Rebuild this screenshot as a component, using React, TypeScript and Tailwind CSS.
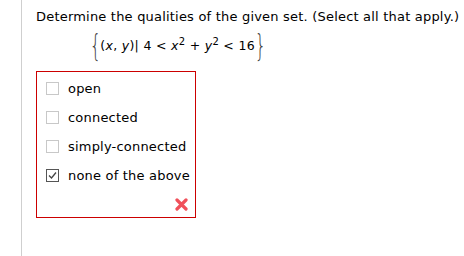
import React from "react";

const options = [
  { label: "open", checked: false },
  { label: "connected", checked: false },
  { label: "simply-connected", checked: false },
  { label: "none of the above", checked: true },
];

function Box({ checked }: { checked: boolean }) {
  return (
    <span
      className={
        "flex h-[13px] w-[13px] shrink-0 items-center justify-center border bg-white " +
        (checked ? "border-[#555]" : "border-[#c8c8c8]")
      }
    >
      {checked && (
        <svg width="11" height="11" viewBox="0 0 11 11">
          <path d="M2 5.5 L4.5 8 L9 2.5" fill="none" stroke="#444" strokeWidth="1.3" />
        </svg>
      )}
    </span>
  );
}

export default function App() {
  return (
    <div className="h-[256px] w-[464px] bg-white font-['DejaVu_Sans',Verdana,sans-serif] text-[13px] tracking-[0.2px] text-black">
      <div className="ml-[21px] flex h-full flex-col border-l border-[#cfcfcf] pl-[14px] pt-[9px]">
        <p className="leading-[16px]">Determine the qualities of the given set. (Select all that apply.)</p>

        <div className="ml-[53px] mt-[6px] flex h-[30px] items-center leading-none">
          <span className="-ml-[3px] -mr-[5px] scale-x-[0.6] text-[30px] font-extralight text-[#444]">{"{"}</span>
          <span className="text-[12.5px] tracking-[0.3px]">
            (<i>x</i>, <i>y</i>)| 4 &lt; <i>x</i>
            <sup className="text-[10px]">2</sup> + <i>y</i>
            <sup className="text-[10px]">2</sup> &lt; 16
          </span>
          <span className="-ml-[4px] scale-x-[0.6] text-[30px] font-extralight text-[#444]">{"}"}</span>
        </div>

        <div className="mt-[10px] flex w-[160px] flex-col border border-[#cc0000] pl-[9px] pt-[2px]">
          {options.map((o) => (
            <label key={o.label} className="flex h-[29px] items-center gap-[9px]">
              <Box checked={o.checked} />
              <span className="leading-none">{o.label}</span>
            </label>
          ))}
          <div className="flex justify-end pb-[6px] pr-[7px] pt-[8px]">
            <svg width="13" height="13" viewBox="0 0 13 13">
              <path d="M2 2 L11 11 M11 2 L2 11" stroke="#f0505a" strokeWidth="3.2" strokeLinecap="round" />
            </svg>
          </div>
        </div>
      </div>
    </div>
  );
}
